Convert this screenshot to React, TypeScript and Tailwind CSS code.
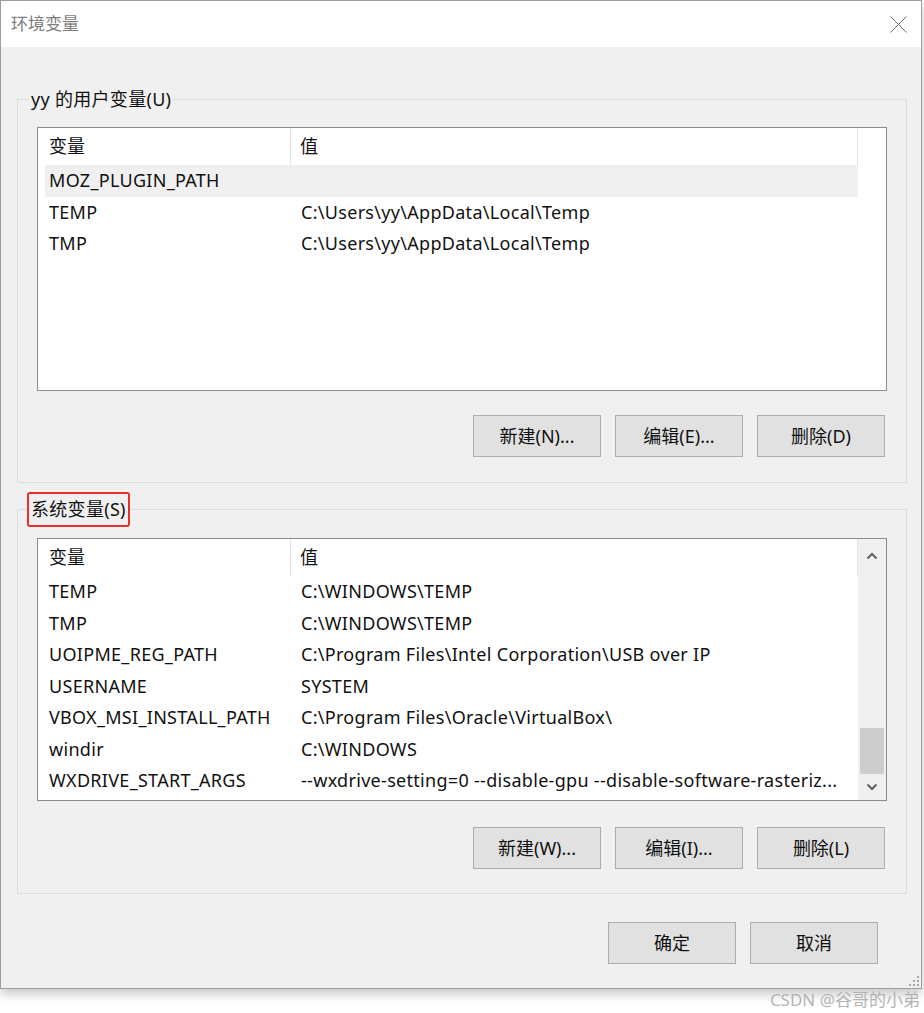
import React from "react"

type Row = { name: string; value: string }

const userVars: Row[] = [
  { name: "MOZ_PLUGIN_PATH", value: "" },
  { name: "TEMP", value: "C:\\Users\\yy\\AppData\\Local\\Temp" },
  { name: "TMP", value: "C:\\Users\\yy\\AppData\\Local\\Temp" },
]

const systemVars: Row[] = [
  { name: "TEMP", value: "C:\\WINDOWS\\TEMP" },
  { name: "TMP", value: "C:\\WINDOWS\\TEMP" },
  { name: "UOIPME_REG_PATH", value: "C:\\Program Files\\Intel Corporation\\USB over IP" },
  { name: "USERNAME", value: "SYSTEM" },
  { name: "VBOX_MSI_INSTALL_PATH", value: "C:\\Program Files\\Oracle\\VirtualBox\\" },
  { name: "windir", value: "C:\\WINDOWS" },
  { name: "WXDRIVE_START_ARGS", value: "--wxdrive-setting=0 --disable-gpu --disable-software-rasteriz..." },
]

function WinButton({ children }: { children: React.ReactNode }) {
  return (
    <button
      type="button"
      className="w-[128px] h-[42px] border border-[#adadad] bg-[#e1e1e1] text-[18px] text-[#111] flex items-center justify-center"
    >
      {children}
    </button>
  )
}

function Chevron({ up }: { up?: boolean }) {
  return (
    <svg width="12" height="8" viewBox="0 0 12 8">
      <path
        d={up ? "M1.5 6.5 L6 2 L10.5 6.5" : "M1.5 1.5 L6 6 L10.5 1.5"}
        fill="none"
        stroke="#606060"
        strokeWidth="2"
      />
    </svg>
  )
}

function VarList({ rows, selected, scroll }: { rows: Row[]; selected?: number; scroll?: boolean }) {
  return (
    <div className="flex border border-[#8c8c8c] bg-white h-full">
      <div className="w-[820px] flex flex-col">
        <div className="flex h-[37px] text-[18px]">
          <div className="w-[253px] pl-[11px] flex items-center border-r border-[#e5e5e5]">变量</div>
          <div className="flex-1 pl-[9px] flex items-center border-r border-[#e5e5e5]">值</div>
        </div>
        {rows.map((r, i) => (
          <div
            key={r.name}
            className={`ml-[7px] flex h-[31.5px] items-center text-[18px] tracking-[0.3px] ${i === selected ? "bg-[#f0f0f0]" : ""}`}
          >
            <div className="w-[246px] pl-[4px] whitespace-nowrap overflow-hidden">{r.name}</div>
            <div className="w-[567px] pl-[10px] whitespace-nowrap overflow-hidden">{r.value}</div>
          </div>
        ))}
      </div>
      {scroll ? (
        <div className="w-[28px] bg-[#f0f0f0] flex flex-col">
          <div className="h-[32px] flex items-center justify-center pt-[2px]">
            <Chevron up />
          </div>
          <div className="flex-1 flex flex-col justify-end">
            <div className="mx-[2px] h-[46px] bg-[#cdcdcd]" />
          </div>
          <div className="h-[26px] flex items-center justify-center">
            <Chevron />
          </div>
        </div>
      ) : (
        <div className="w-[28px]" />
      )}
    </div>
  )
}

export default function App() {
  return (
    <div className="relative w-[924px] h-[1013px] bg-white font-['Noto_Sans','Noto_Sans_CJK_SC',sans-serif] text-[#111]">
      <div className="relative w-[922px] h-[989px] border border-[#9c9c9c] bg-[#f0f0f0] shadow-[0_5px_10px_rgba(0,0,0,0.22)] flex flex-col">
        {/* title bar */}
        <div className="h-[46px] bg-white flex items-center justify-between pl-[10px] pr-[14px]">
          <span className="text-[17px] text-[#7d7d7d]">环境变量</span>
          <svg width="17" height="17" viewBox="0 0 17 17">
            <path d="M0.5 0.5 L16.5 16.5 M16.5 0.5 L0.5 16.5" stroke="#6e6e6e" strokeWidth="1" />
          </svg>
        </div>

        <div className="px-[16px] flex flex-col">
          <fieldset className="mt-[41px] border border-[#dcdcdc] px-[19px] pb-[25px]">
            <legend className="ml-[-8px] px-[2px] h-[22px] leading-[22px] text-[18px] tracking-[0.3px]">yy 的用户变量(U)</legend>
            <div className="mt-[17px] h-[264px]">
              <VarList rows={userVars} selected={0} />
            </div>
            <div className="mt-[24px] flex justify-end gap-[14px] pr-[2px]">
              <WinButton>新建(N)...</WinButton>
              <WinButton>编辑(E)...</WinButton>
              <WinButton>删除(D)</WinButton>
            </div>
          </fieldset>

          <fieldset className="mt-[9px] border border-[#dcdcdc] px-[19px] pb-[24px]">
            <legend className="ml-[-10px] px-[2px] h-[35px] flex items-center border-2 border-[#e8312c] rounded-[3px] text-[18px] tracking-[0.3px]">
              系统变量(S)
            </legend>
            <div className="mt-[11px] h-[263px]">
              <VarList rows={systemVars} scroll />
            </div>
            <div className="mt-[26px] flex justify-end gap-[14px] pr-[2px]">
              <WinButton>新建(W)...</WinButton>
              <WinButton>编辑(I)...</WinButton>
              <WinButton>删除(L)</WinButton>
            </div>
          </fieldset>

          <div className="mt-[28px] flex justify-end gap-[14px] pr-[27px]">
            <WinButton>确定</WinButton>
            <WinButton>取消</WinButton>
          </div>
        </div>

        {/* resize grip */}
        <svg className="absolute right-[2px] bottom-[2px]" width="10" height="10" viewBox="0 0 10 10">
          <g fill="#a8a8a8">
            <rect x="8" y="0" width="2" height="2" />
            <rect x="4" y="4" width="2" height="2" />
            <rect x="8" y="4" width="2" height="2" />
            <rect x="0" y="8" width="2" height="2" />
            <rect x="4" y="8" width="2" height="2" />
            <rect x="8" y="8" width="2" height="2" />
          </g>
        </svg>
      </div>

      <div className="absolute right-[4px] bottom-[1px] text-[17px] text-[#b4b4b4]">CSDN @谷哥的小弟</div>
    </div>
  )
}
